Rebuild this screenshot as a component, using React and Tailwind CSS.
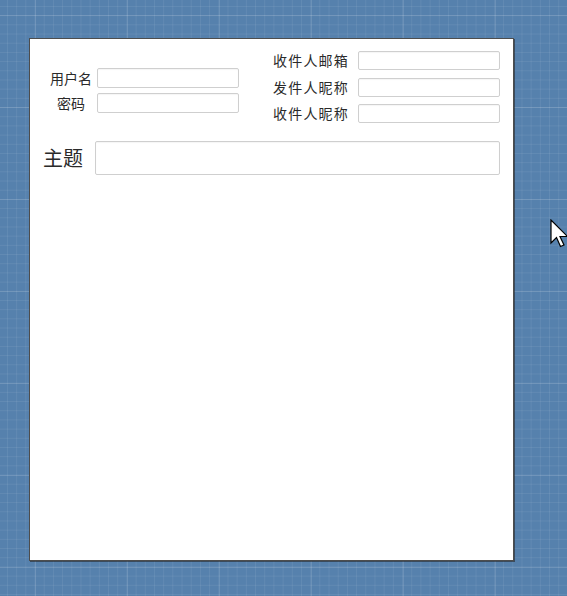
import React from "react";

function Field({ w = "w-[142px]", h = "h-[19px]" }) {
  return (
    <div className={`${w} ${h} rounded-[2px] border border-[#cfcfcf] bg-white shadow-[inset_0_1px_1px_rgba(0,0,0,0.04)]`} />
  );
}

function Cursor() {
  return (
    <svg className="absolute left-[550px] top-[219px]" width="20" height="30" viewBox="0 0 20 30">
      <path d="M1 1 L1 24 L6.5 18.5 L10.5 27.5 L14 26 L10 17.5 L17.5 17.5 Z" fill="#ffffff" stroke="#000000" strokeWidth="1.2" strokeLinejoin="miter" />
    </svg>
  );
}

export default function App() {
  const font = "font-['Noto_Sans_CJK_SC','Noto_Sans',sans-serif]";
  return (
    <div
      className={`relative h-[596px] w-[567px] overflow-hidden bg-[#5681ad] bg-[linear-gradient(rgba(255,255,255,0.12)_1px,transparent_1px),linear-gradient(90deg,rgba(255,255,255,0.12)_1px,transparent_1px),linear-gradient(rgba(255,255,255,0.07)_1px,transparent_1px),linear-gradient(90deg,rgba(255,255,255,0.07)_1px,transparent_1px)] bg-[size:92px_92px,92px_92px,9.2px_9.2px,9.2px_9.2px] bg-[position:35px_15px,35px_15px,7px_6px,7px_6px] pl-[29px] pt-[38px] ${font}`}
    >
      <div className="h-[523px] w-[485px] border border-[#4d4d4d] bg-white shadow-[1px_1px_0_rgba(40,40,40,0.6)]">
        <div className="flex items-start justify-between pl-[15px] pr-[13px] pt-[12px]">
          <div className="mt-[17px] flex flex-col gap-[5px]">
            <div className="flex items-center">
              <span className="w-[52px] text-center text-[14px] leading-[20px] text-[#2a2a2a]">用户名</span>
              <Field w="w-[142px]" h="h-[20px]" />
            </div>
            <div className="flex items-center">
              <span className="w-[52px] text-center text-[14px] leading-[20px] text-[#2a2a2a]">密码</span>
              <Field w="w-[142px]" h="h-[20px]" />
            </div>
          </div>
          <div className="flex flex-col gap-[7.5px]">
            {["收件人邮箱", "发件人昵称", "收件人昵称"].map((t, i) => (
              <div key={i} className="flex h-[19px] items-center gap-[9px]">
                <span className="text-[14px] leading-[19px] tracking-[1.2px] text-[#2a2a2a]">{t}</span>
                <Field w="w-[142px]" h="h-[19px]" />
              </div>
            ))}
          </div>
        </div>
        <div className="mt-[18px] flex items-center gap-[12px] pl-[13px] pr-[13px]">
          <span className="text-[20px] leading-[26px] text-[#2a2a2a]">主题</span>
          <Field w="flex-1" h="h-[34px]" />
        </div>
      </div>
      <Cursor />
    </div>
  );
}
